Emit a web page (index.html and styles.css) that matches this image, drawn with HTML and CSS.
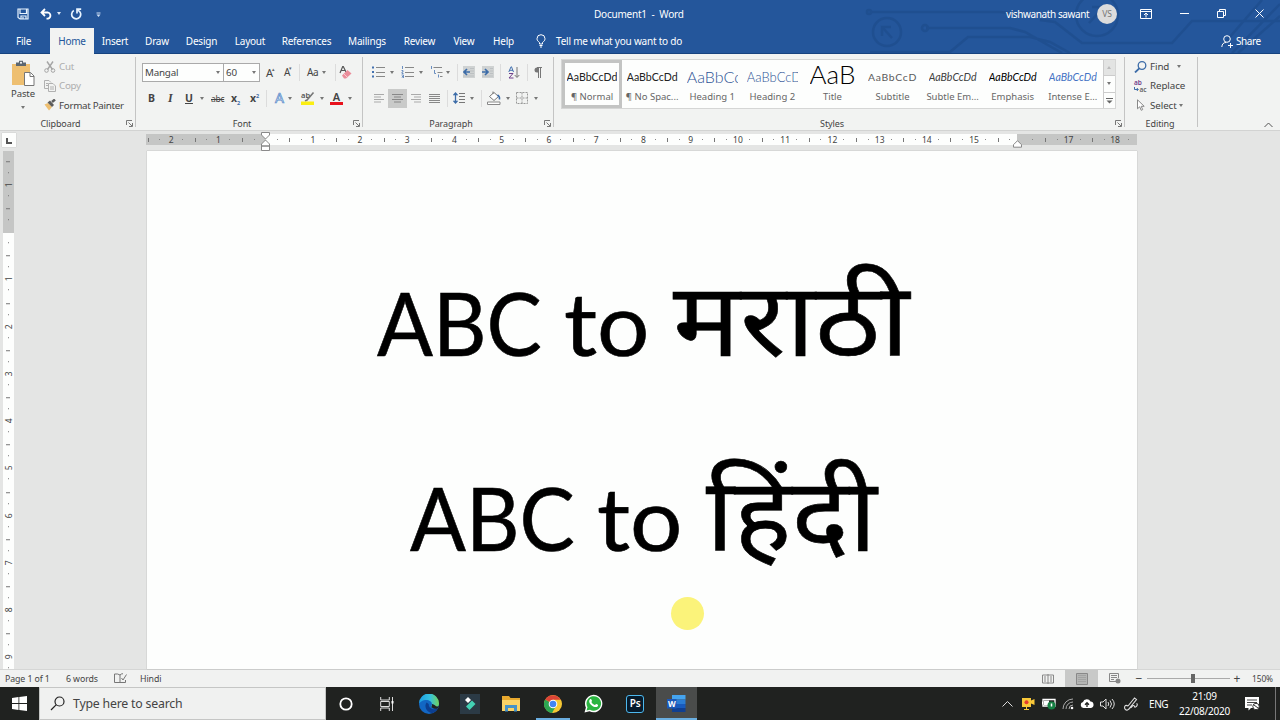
FILE: index.html
```
<!DOCTYPE html>
<html lang="en">

<head>
    <meta charset="UTF-8">
    <meta name="viewport" content="width=device-width, initial-scale=1.0">
    <title>Document1 - Word</title>
    <link rel="stylesheet" href="styles.css">
</head>

<body>
    <header class="header">
        <!-- Circuit pattern behind the title bar -->
        <svg class="header-art" width="430" height="53" viewBox="850 0 430 53">
            <path d="M870 12H1000L1020 14M926 28H1010L1025 32L1062 53M870 52H950L968 37H1030L1050 42L1070 53M1040 20L1055 22L1082 43H1172L1192 21H1280M1232 53L1280 4M1238 53L1280 16M1222 46L1262 0" />
            <circle cx="887" cy="32" r="14" />
            <path d="M892 38L883 28M882 36V27H891" />
            <circle cx="1097" cy="15" r="21" />
            <path d="M1089 23L1103 8M1092 7H1104V19" />
            <circle cx="925" cy="28" r="3" />
            <circle cx="869" cy="12" r="2" />
        </svg>

        <div class="titlebar">
            <svg class="icon" width="12" height="12" viewBox="0 0 12 12"><path d="M1 1h10v10H3L1 9.500zM3 1v4.500h6.500V1M4 11V8h5v3M6 11V9" fill="none" stroke="#e8f4ff" stroke-width="1.200" /></svg>
            <svg class="icon" width="13" height="12" viewBox="0 0 13 12"><path d="M5 1L1.500 4.500L5 8M2 4.500H8a3.200 3.200 0 0 1 0 6.200H6.500" fill="none" stroke="#fff" stroke-width="1.800" /></svg>
            <i class="caret light"></i>
            <svg class="icon" width="12" height="12" viewBox="0 0 12 12"><path d="M3.800 2.500A4.500 4.500 0 1 0 8 2.200M7 5.500V1.200H11.200" fill="none" stroke="#e8f4ff" stroke-width="1.700" /></svg>
            <svg class="icon" width="5" height="6" viewBox="0 0 5 6"><path d="M.5 1h4" stroke="#cfe0f5" /><path d="M.5 2.500h4L2.500 5z" fill="#cfe0f5" /></svg>
            <span class="doc-title">Document1&nbsp; -&nbsp; Word</span>
            <span class="user-name">vishwanath sawant</span>
            <span class="avatar">VS</span>
            <svg class="icon" width="12" height="10" viewBox="0 0 12 10"><path d="M.5.5h11v9H.500zM.5 2.500h11M6 8.500V4M4 6l2-2 2 2" fill="none" stroke="#fff" /></svg>
            <svg class="icon" width="9" height="10" viewBox="0 0 9 10"><path d="M0 4.500h9" stroke="#fff" /></svg>
            <svg class="icon" width="9" height="9" viewBox="0 0 9 9"><path d="M.5 2.500h6v6h-6zM2.500 2.500v-2h6v6h-2" fill="none" stroke="#fff" /></svg>
            <svg class="icon" width="9" height="9" viewBox="0 0 9 9"><path d="M.5.5l8 8M8.500.5l-8 8" stroke="#fff" /></svg>
        </div>

        <nav class="tabs">
            <a>File</a>
            <a class="active">Home</a>
            <a>Insert</a>
            <a>Draw</a>
            <a>Design</a>
            <a>Layout</a>
            <a>References</a>
            <a>Mailings</a>
            <a>Review</a>
            <a>View</a>
            <a>Help</a>
            <svg class="icon" width="10" height="14" viewBox="0 0 10 14"><path d="M3.500 10V8.500C2 7.200 1 6.500 1 4.700a4 4 0 0 1 8 0C9 6.500 8 7.200 6.500 8.500V10zM3.500 11.500h3M4 13h2" fill="none" stroke="#fff" /></svg>
            <span class="tell-me">Tell me what you want to do</span>
            <svg class="icon" width="12" height="13" viewBox="0 0 12 13"><circle cx="6" cy="4" r="3.300" fill="none" stroke="#fff" /><path d="M.8 12C1 9 2.500 7.600 5 7.500M7 10.500h5M9.500 8v5" fill="none" stroke="#fff" /></svg>
            <span class="share">Share</span>
        </nav>
    </header>

    <section class="ribbon">
        <div class="group clipboard">
            <div class="paste">
                <svg width="24" height="27" viewBox="0 0 24 27"><path d="M1 4h18v21H1z" fill="#eebf71" /><path d="M5 6V2.500h3V.8h4v1.700h3V6z" fill="#5c6670" /><circle cx="10" cy="2.800" r="1" fill="#fff" /><path d="M13.500 12.500h6l3.500 3.500v9.500h-9.500z" fill="#fff" stroke="#777" /><path d="M19 12.500V16.500h4" fill="none" stroke="#777" /></svg>
                <span>Paste</span>
                <i class="caret"></i>
            </div>
            <div class="clip-actions">
                <div class="action disabled"><svg width="12" height="12" viewBox="0 0 12 12"><path d="M3 .5l5.500 8M9 .5L3.500 8.500" stroke="#a5a5a5" stroke-width="1.400" /><circle cx="2.500" cy="9.500" r="1.800" fill="none" stroke="#a5a5a5" /><circle cx="9" cy="9.500" r="1.800" fill="none" stroke="#a5a5a5" /></svg>Cut</div>
                <div class="action disabled"><svg width="12" height="12" viewBox="0 0 12 12"><path d="M5 8.500H.500v-8H5L7 2.500M4.500 3.500H9l2.500 2.500v5.500h-7zM2 3.500h2M2 5.500h2M6 7h4M6 9h4" fill="none" stroke="#b0b0b0" /></svg>Copy</div>
                <div class="action"><svg width="12" height="12" viewBox="0 0 12 12"><path d="M.5 5.500L4 4l4 4-3 3.500z" fill="#eebf71" /><path d="M3.500 3.500L6 1.500l4 4.500-2 2z" fill="#5c5c5c" /><path d="M8 3l3-2.500" stroke="#5c5c5c" stroke-width="2.500" /></svg>Format Painter</div>
            </div>
            <span class="group-name">Clipboard</span>
            <svg class="launcher" width="7" height="7" viewBox="0 0 7 7"><path d="M.5 5V.5H6M2.500 2.500l3.500 3.500M6.500 3v3.500H3" fill="none" stroke="#777" /></svg>
        </div>

        <div class="group font">
            <div class="row font-top">
                <span class="combo">Mangal<i class="caret"></i></span>
                <span class="combo">60<i class="caret"></i></span>
                <span class="grow">A<sup>&#9652;</sup></span>
                <span class="grow small">A<sup>&#9662;</sup></span>
                <i class="sep"></i>
                <span class="case">Aa</span>
                <i class="caret"></i>
                <i class="sep"></i>
                <svg width="13" height="13" viewBox="0 0 13 13"><path d="M1 7L3.700 .6h.6L7 6M2.200 4.500h3.500" fill="none" stroke="#555" stroke-width="1.200" /><path d="M3 9.500L8.500 4l4 3.500L7 12.500H5z" fill="#ea8d9a" /><path d="M5 8l3.500 3.500" stroke="#f6ccd2" /></svg>
            </div>
            <div class="row font-bottom">
                <b>B</b>
                <b class="italic">I</b>
                <b class="underline">U</b>
                <i class="caret"></i>
                <span class="strike">abc</span>
                <b>x<sub>2</sub></b>
                <b>x<sup>2</sup></b>
                <i class="sep"></i>
                <span class="effect">A</span>
                <i class="caret"></i>
                <svg class="highlight" width="14" height="14" viewBox="0 0 14 14"><text x="0" y="7" font-size="7.500" font-weight="600" fill="#555">ab</text><path d="M12.500 1.500L6 9l-2 1" fill="none" stroke="#777" stroke-width="1.600" /><path d="M0 10.500h13V14H0z" fill="#fbee12" /></svg>
                <i class="caret"></i>
                <span class="font-color">A</span>
                <i class="caret"></i>
            </div>
            <span class="group-name">Font</span>
            <svg class="launcher" width="7" height="7" viewBox="0 0 7 7"><path d="M.5 5V.5H6M2.500 2.500l3.500 3.500M6.500 3v3.500H3" fill="none" stroke="#777" /></svg>
        </div>

        <div class="group paragraph">
            <div class="row para-top">
                <svg width="13" height="12" viewBox="0 0 13 12"><path d="M0 1.500h2M0 6h2M0 10.500h2" stroke="#4472b0" stroke-width="2" /><path d="M4 1.500h9M4 6.500h9M4 10.500h9" stroke="#888" /></svg>
                <i class="caret"></i>
                <svg width="13" height="12" viewBox="0 0 13 12"><path d="M1.500 0v3M.500 4.500h1.500V6H1v1.500h1.500M.500 9h2v3h-2M1 10.500h1" fill="none" stroke="#6b8fc0" /><path d="M4 1.500h9M4 6.500h9M4 10.500h9" stroke="#888" /></svg>
                <i class="caret"></i>
                <svg width="13" height="12" viewBox="0 0 13 12"><path d="M1.500 0v3M4.500 4v3.500h1.500M8.500 8.500v3" fill="none" stroke="#6b8fc0" /><path d="M3.500 1.500H12M7.500 6.500h5M10 10.500h2.500" stroke="#888" /></svg>
                <i class="caret"></i>
                <i class="sep"></i>
                <svg width="12" height="12" viewBox="0 0 12 12"><path d="M0 0h12v12H0z" fill="#cfd2d2" /><path d="M7 2.500h4M7 5h4M7 7.500h4M0 10h11" stroke="#bcc0c2" /><path d="M7 6H1.500M4 3L1 6l3 3" fill="none" stroke="#3c6ca8" stroke-width="1.700" /></svg>
                <svg width="12" height="12" viewBox="0 0 12 12"><path d="M0 0h12v12H0z" fill="#cfd2d2" /><path d="M8 2.500h3M8 5h3M8 7.500h3M0 10h11" stroke="#bcc0c2" /><path d="M0 6h5.500M3 3l3 3-3 3" fill="none" stroke="#3c6ca8" stroke-width="1.700" /></svg>
                <i class="sep"></i>
                <svg width="12" height="13" viewBox="0 0 12 13"><path d="M.8 6L3 .8h.5L5.500 6M1.500 4.300H5" fill="none" stroke="#4472b0" /><path d="M1 7.500h4L1 12h4.500" fill="none" stroke="#70418c" /><path d="M9 1v10M6.700 9L9 11.500 11.300 9" fill="none" stroke="#777" /></svg>
                <i class="sep"></i>
                <svg width="8" height="11" viewBox="0 0 8 11"><path d="M4 .5H3a2.500 2.500 0 0 0 0 5h1z" fill="#777" /><path d="M3 .5h5M4.500 0v11M6.500 0v11" stroke="#777" fill="none" /></svg>
            </div>
            <div class="row para-bottom">
                <svg width="10" height="9" viewBox="0 0 10 9"><path d="M0 .5h10M0 3h7M0 5.500h10M0 8h7" stroke="#aaa" /></svg>
                <span class="pressed"><svg width="11" height="9" viewBox="0 0 11 9"><path d="M0 .5h11M2 3h7M0 5.500h11M2 8h7" stroke="#888" /></svg></span>
                <svg width="10" height="9" viewBox="0 0 10 9"><path d="M0 .5h10M3 3h7M0 5.500h10M3 8h7" stroke="#aaa" /></svg>
                <svg width="11" height="9" viewBox="0 0 11 9"><path d="M0 .5h11M0 2.500h11M0 4.500h11M0 6.500h11M0 8.500h11" stroke="#888" /></svg>
                <i class="sep"></i>
                <svg width="12" height="12" viewBox="0 0 12 12"><path d="M2.500 1v10M.500 3.200l2-2.200 2 2.200M.500 8.800l2 2.200 2-2.200" fill="none" stroke="#3c6ca8" stroke-width="1.300" /><path d="M6 1.500h6M6 4.500h6M6 7.500h6M6 10.500h6" stroke="#777" /></svg>
                <i class="caret"></i>
                <i class="sep"></i>
                <svg width="14" height="14" viewBox="0 0 14 14"><path d="M2.500 5.500L7 1.500l4.500 4L7 9.500zM6 3V.5" fill="#fff" stroke="#777" /><path d="M10.500 4q2.500 1.500 2 4.500" fill="none" stroke="#3c6ca8" stroke-width="1.500" /><path d="M.5 11h12.500v2.500H.500z" fill="#fff" stroke="#888" /></svg>
                <i class="caret"></i>
                <svg width="12" height="12" viewBox="0 0 12 12"><path d="M.5.5h11v11H.500zM6 .5v11M.500 6h11" fill="none" stroke="#999" stroke-dasharray="2 1" /></svg>
                <i class="caret"></i>
            </div>
            <span class="group-name">Paragraph</span>
            <svg class="launcher" width="7" height="7" viewBox="0 0 7 7"><path d="M.5 5V.5H6M2.500 2.500l3.500 3.500M6.500 3v3.500H3" fill="none" stroke="#777" /></svg>
        </div>

        <div class="group styles">
            <div class="gallery">
                <div class="style selected"><span class="preview">AaBbCcDd</span><span>&para; Normal</span></div>
                <div class="style"><span class="preview">AaBbCcDd</span><span>&para; No Spac...</span></div>
                <div class="style"><span class="preview heading1">AaBbCc</span><span>Heading 1</span></div>
                <div class="style"><span class="preview heading2">AaBbCcD</span><span>Heading 2</span></div>
                <div class="style"><span class="preview title">AaB</span><span>Title</span></div>
                <div class="style"><span class="preview subtitle">AaBbCcD</span><span>Subtitle</span></div>
                <div class="style"><span class="preview subtle">AaBbCcDd</span><span>Subtle Em...</span></div>
                <div class="style"><span class="preview emphasis">AaBbCcDd</span><span>Emphasis</span></div>
                <div class="style"><span class="preview intense">AaBbCcDd</span><span>Intense E...</span></div>
                <div class="gallery-scroll">
                    <div class="off"><i class="caret up"></i></div>
                    <div><i class="caret"></i></div>
                    <div><svg width="7" height="7" viewBox="0 0 7 7"><path d="M0 1.500h7" stroke="#666" /><path d="M.5 3.500h6l-3 3z" fill="#666" /></svg></div>
                </div>
            </div>
            <span class="group-name">Styles</span>
            <svg class="launcher" width="7" height="7" viewBox="0 0 7 7"><path d="M.5 5V.5H6M2.500 2.500l3.500 3.500M6.500 3v3.500H3" fill="none" stroke="#777" /></svg>
        </div>

        <div class="group editing">
            <div class="action"><svg width="13" height="12" viewBox="0 0 13 12"><circle cx="8" cy="4.500" r="3.800" fill="none" stroke="#3c6ca8" stroke-width="1.300" /><path d="M5.300 7.300L1 11.500" stroke="#3c6ca8" stroke-width="1.800" /></svg>Find<i class="caret"></i></div>
            <div class="action"><svg class="highlight" width="13" height="12" viewBox="0 0 13 12"><text x="0" y="5" font-size="6.500" font-weight="600" fill="#70418c">ab</text><text x="5.500" y="11.500" font-size="6.500" font-weight="600" fill="#666">ac</text><path d="M.5 7v2.500h3.500M2.800 8l1.500 1.500L2.800 11" fill="none" stroke="#3c6ca8" /></svg>Replace</div>
            <div class="action"><svg width="13" height="12" viewBox="0 0 13 12"><path d="M3.500.8v9l2.200-2 1.500 3.500 1.500-.7-1.500-3.300h3z" fill="#fff" stroke="#888" /></svg>Select<i class="caret"></i></div>
            <span class="group-name">Editing</span>
        </div>
        <svg class="collapse" width="9" height="6" viewBox="0 0 9 6"><path d="M.5 5L4.500 1l4 4" fill="none" stroke="#555" /></svg>
    </section>

    <main class="workspace">
        <aside class="side">
            <div class="tab-stop"><svg width="6" height="6" viewBox="0 0 6 6"><path d="M1 0v5h5" fill="none" stroke="#555" stroke-width="2" /></svg></div>
            <div class="v-ruler">
                <span>1</span>
                <span></span>
                <span>1</span><span>2</span><span>3</span><span>4</span><span>5</span><span>6</span><span>7</span><span>8</span><span>9</span>
            </div>
        </aside>
        <div class="canvas">
            <div class="h-ruler">
                <span>2</span><span>1</span><span></span><span>1</span><span>2</span><span>3</span><span>4</span><span>5</span><span>6</span><span>7</span><span>8</span><span>9</span><span>10</span><span>11</span><span>12</span><span>13</span><span>14</span><span>15</span><span></span><span>17</span><span>18</span>
                <svg class="indent left" width="9" height="20" viewBox="0 0 9 20"><path d="M.5.5h8V3l-4 4-4-4zM4.500 8l4 4v2h-8v-2zM.500 14h8v4.500h-8z" fill="#fff" stroke="#888" /></svg>
                <svg class="indent right" width="9" height="8" viewBox="0 0 9 8"><path d="M4.500.7l4 4v2.500h-8V4.700z" fill="#fff" stroke="#888" /></svg>
            </div>
            <article class="page">
                <p class="line first"><span class="latin">ABC</span><span class="latin to">to</span><span class="deva" lang="mr">मराठी</span></p>
                <p class="line second"><span class="latin">ABC</span><span class="latin to">to</span><span class="deva" lang="hi">हिंदी</span></p>
                <div class="pointer"></div>
            </article>
        </div>
    </main>

    <footer class="statusbar">
        <span>Page 1 of 1</span>
        <span>6 words</span>
        <svg width="13" height="11" viewBox="0 0 13 11"><path d="M6 9.500V2Q4 .5.5 1v8.500h5.500M6 2Q7 .7 9 .7M6 9.500h5.500V7M7.500 5l1.500 2 3.500-5.500" fill="none" stroke="#777" /></svg>
        <span>Hindi</span>
        <div class="view"><svg width="12" height="10" viewBox="0 0 12 10"><path d="M.5 1h11v8H.500zM6 0v10M2 3h2M2 5h2M2 7h2M8 3h2M8 5h2M8 7h2" fill="none" stroke="#888" /></svg></div>
        <div class="view on"><svg width="12" height="12" viewBox="0 0 12 12"><path d="M.5.5h11v11H.500z" fill="#b4b5b4" stroke="#888" /><path d="M2 2.500h8M2 4.500h8M2 6.500h8M2 8.500h8" stroke="#a2a3a2" /></svg></div>
        <div class="view"><svg width="12" height="11" viewBox="0 0 12 11"><path d="M7 8.500H.500v-8h9V5M2 2.500h6M2 4.500h6M2 6.500h3" fill="none" stroke="#888" /><circle cx="9" cy="8" r="2.500" fill="#888" /></svg></div>
        <span class="zoom-btn">&minus;</span>
        <div class="slider"><i></i></div>
        <span class="zoom-btn">+</span>
        <span class="percent">150%</span>
    </footer>

    <div class="taskbar">
        <div class="start"><svg width="15" height="15" viewBox="0 0 15 15"><path d="M0 2l6.500-1v6H0zM7.300.9L15 0v7H7.300zM0 8h6.500v6L0 13zM7.300 8H15v7l-7.700-1z" fill="#fff" /></svg></div>
        <div class="search">
            <svg width="15" height="15" viewBox="0 0 15 15"><circle cx="9.500" cy="5.500" r="4.500" fill="none" stroke="#222" stroke-width="1.200" /><path d="M6.300 8.700L1 14" stroke="#222" stroke-width="1.200" /></svg>
            <span>Type here to search</span>
        </div>
        <div class="apps">
            <div><svg width="14" height="14" viewBox="0 0 14 14"><circle cx="7" cy="7" r="5.700" fill="none" stroke="#fff" stroke-width="1.800" /></svg></div>
            <div><svg width="15" height="14" viewBox="0 0 15 14"><path d="M.7 0v3h8.600V0M.7 14v-3h8.600v3M.7 4.500h8.600v5H.700zM12.500 0v14" fill="none" stroke="#ddd" /><path d="M11.500 4h2v2.500h-2z" fill="#fff" /></svg></div>
            <div><svg width="20" height="20" viewBox="0 0 20 20">
                <defs>
                    <linearGradient id="edgeTop" x1="0" x2="1"><stop offset="0" stop-color="#1b9de2" /><stop offset=".55" stop-color="#35c1df" /><stop offset="1" stop-color="#72d45a" /></linearGradient>
                </defs>
                <circle cx="10" cy="10" r="10" fill="#1267c4" />
                <path d="M0 9.500A10 10 0 0 1 20 9.500C20 13 17 14 13.500 13.500 11.500 13 12.500 12 13 10.500 13 7 9.500 5.500 6 6 3 6.500 1 8 0 9.500z" fill="url(#edgeTop)" />
                <path d="M7.500 8.500C5 12 7 18 13 19.300 16 18.300 18 16.500 18.500 14.500 15 16.500 9.500 14.500 9.700 10z" fill="#0c3f91" />
                <path d="M12.800 13.500c-1-.5.5-1.500.2-3.500 3 0 4 4 6.800 2-.5 1-.8 1.800-1.300 2.600-2 .6-4 0-5.700-1.100z" fill="#202220" />
            </svg></div>
            <div><svg width="20" height="20" viewBox="0 0 20 20"><path d="M0 0h20v20H0z" fill="#2b3a45" /><path d="M8 3l3 3-3 3-3-3z" fill="#fff" /><path d="M12 6.500l3.500 3.500-6 6L6 12.500z" fill="#43d2b5" /></svg></div>
            <div><svg width="18" height="17" viewBox="0 0 18 17"><path d="M0 1h7l1.500 2H18v13H0z" fill="#e8a92e" /><path d="M0 5h18v11H0z" fill="#fbd366" /><path d="M3 10h12v6.500h-3V13H6v3.500H3z" fill="#4693c8" /></svg></div>
            <div class="open"><svg width="18" height="18" viewBox="0 0 18 18"><circle cx="9" cy="9" r="9" fill="#f6c834" /><path d="M9 9L1.200 4.500A9 9 0 0 0 8 18l4-7z" fill="#2da652" /><path d="M9 9L1.200 4.500A9 9 0 0 1 16.800 4.800H9z" fill="#dc4437" /><circle cx="9" cy="9" r="4.300" fill="#fff" /><circle cx="9" cy="9" r="3.300" fill="#4285f4" /></svg></div>
            <div><svg width="19" height="19" viewBox="0 0 19 19"><path d="M.5 18.500l1.400-5A8.700 8.700 0 1 1 5.500 17.200z" fill="#fff" /><path d="M2.500 16.500l1-3.300A7.300 7.300 0 1 1 6 15.700z" fill="#2bb441" /><path d="M6 5.200C7 4.300 7.600 5.500 8 6.800 8 7.500 7.300 7.800 7.500 8.300c.8 1.500 2 2.300 3.300 2.800.6-.2.9-1.400 1.500-1.100 2.200 1 2 1.100 1.500 2.200-1.500 1.700-4 .8-6-.8C5.500 9.500 4.300 7 6 5.200z" fill="#fff" /></svg></div>
            <div><span class="ps">Ps</span></div>
            <div class="open current"><svg width="19" height="19" viewBox="0 0 19 19"><path d="M5 1h13.500v4.500H5z" fill="#45a4ef" /><path d="M5 5.500h13.500V10H5z" fill="#2b7cd3" /><path d="M5 10h13.500v4H5z" fill="#185abd" /><path d="M5 14h13.500v4H5z" fill="#103f91" /><path d="M0 5h9.500v9.500H0z" fill="#1b58b8" /><text x="1" y="12.500" font-size="8" font-weight="700" fill="#fff">W</text></svg></div>
        </div>
        <div class="tray">
            <svg width="11" height="7" viewBox="0 0 11 7"><path d="M.5 6.500l5-5 5 5" fill="none" stroke="#ddd" /></svg>
            <svg width="14" height="13" viewBox="0 0 14 13"><path d="M1 1h9v2.500L13.500 2v6L10 6.500V10H1z" fill="#f8c839" /><path d="M5.500 10v2M3 12.500h5" stroke="#f8c839" /><circle cx="5.500" cy="5.200" r="2" fill="#e33b2e" /></svg>
            <svg width="14" height="12" viewBox="0 0 14 12"><path d="M1 1.500h12V8H1zM0 3.500v3" fill="none" stroke="#fff" stroke-width="1.300" /><path d="M2 2.500h5V7H2z" fill="#fff" /><circle cx="9.500" cy="7.500" r="4" fill="#168044" /><path d="M9.500 5.500v3" stroke="#fff" stroke-width="1.500" /></svg>
            <svg width="12" height="12" viewBox="0 0 12 12"><path d="M1 11A10 10 0 0 1 11 1M4 11a7 7 0 0 1 7-7M7 11a4 4 0 0 1 4-4" fill="none" stroke="#aaa" /><circle cx="10" cy="10" r="1.300" fill="#fff" /></svg>
            <svg width="14" height="11" viewBox="0 0 14 11"><path d="M3.500 10a3 3 0 0 1-.5-5.900 4 4 0 0 1 7.500-.6A3.300 3.300 0 0 1 11 10z" fill="#fff" /><path d="M7 9V5M5 6.700L7 4.700l2 2" fill="none" stroke="#202220" stroke-width="1.300" /></svg>
            <svg width="15" height="12" viewBox="0 0 15 12"><path d="M.5 4h2.500L6 1v10L3 8H.500zM8 4q1.500 2 0 4M10 2.500q3 3.500 0 7M12 1q4.500 5 0 10" fill="none" stroke="#ddd" /></svg>
            <svg width="14" height="14" viewBox="0 0 14 14"><path d="M4 9l6.500-8 2 1.500L6 10.500M4 9C1 7 0 10 1 12s4 1 5-1.500M6 10.500c1.500 1 2-2 3.500-2s.5 2 2 1.500 2.500-3 1-3.500" fill="none" stroke="#ddd" stroke-width="1.100" /></svg>
            <span class="lang">ENG</span>
            <span class="clock">21:09<br>22/08/2020</span>
            <svg width="15" height="14" viewBox="0 0 15 14"><path d="M0 0h14v11H6l-2.500 2.500V11H0z" fill="#fff" /><path d="M2 3h10M2 5.500h10M2 8h5" stroke="#444" /><circle cx="11" cy="9.500" r="3.200" fill="#fff" stroke="#333" /><path d="M9 8l4 3" stroke="#333" /></svg>
        </div>
    </div>
</body>

</html>
```

FILE: styles.css
```
* {
    box-sizing: border-box;
}

body {
    margin: 0;
    width: 1280px;
    height: 720px;
    overflow: hidden;
    display: flex;
    flex-direction: column;
    font-family: "Noto Sans", "Open Sans", sans-serif;
    font-size: 10px;
    color: #444;
    background: #e4e5e4;
}

svg {
    display: block;
    flex: none;
}

sup,
sub {
    line-height: 0;
}

/* Header */
.header {
    position: relative;
    height: 54px;
    background: #24569b;
    border-bottom: 1px solid #17437f;
    color: #fff;
    letter-spacing: -0.22px;
    flex: none;
}

.header-art {
    position: absolute;
    top: 0;
    right: 0;
    fill: none;
    stroke: #1d4b8a;
    stroke-width: 2.5;
    opacity: 0.6;
}

.titlebar {
    position: relative;
    height: 27px;
    display: grid;
    grid-template-columns: 23px 17px 13px 26px 498px 412px 91px 43px 40px 37px 38px 20px;
    padding-left: 17px;
    align-items: center;
    white-space: nowrap;
}

.titlebar > :nth-child(5) {
    margin-top: 2px;
}

.user-name {
    letter-spacing: -0.4px;
}

.avatar {
    width: 20px;
    height: 20px;
    border-radius: 50%;
    background: #dcdcdc;
    color: #777;
    font-size: 8.5px;
    line-height: 20px;
    text-align: center;
}

.tabs {
    position: relative;
    height: 26px;
    margin-top: 1px;
    display: grid;
    grid-template-columns: 50px 44px 42px 42px 47px 50px 63px 58px 47px 42px 51px 20px 665px 15px 50px;
    align-items: center;
    white-space: nowrap;
}

.tabs a {
    text-align: center;
    line-height: 26px;
}

.tabs a:first-child {
    padding-right: 3px;
}

.tabs .active {
    background: #f2f3f2;
    color: #24569b;
}

.tabs a:nth-child(11) {
    padding-right: 14px;
}

.share {
    letter-spacing: -0.4px;
}

.caret {
    display: block;
    width: 0;
    height: 0;
    border: 2.5px solid transparent;
    border-top: 3px solid #777;
    border-bottom: 0;
}

.caret.light {
    border-top-color: #dbe8f8;
}

.caret.up {
    border-top: 0;
    border-bottom: 3px solid #bbb;
}

/* Ribbon */
.ribbon {
    height: 77px;
    flex: none;
    display: flex;
    background: #f2f3f2;
    border-bottom: 1px solid #d2d3d2;
}

.group {
    position: relative;
    height: 70px;
    margin-top: 3px;
    border-right: 1px solid #c4c4c4;
    flex: none;
}

.group-name {
    position: absolute;
    bottom: -4px;
    left: 0;
    right: 14px;
    text-align: center;
    font-size: 9px;
    letter-spacing: -0.1px;
    line-height: 14px;
}

.launcher {
    position: absolute;
    right: 2px;
    bottom: 0;
}

.clipboard {
    width: 136px;
    display: flex;
}

.paste {
    width: 44px;
    padding: 3px 0 0 2px;
    display: flex;
    flex-direction: column;
    align-items: center;
    font-size: 9.5px;
    line-height: 14px;
    letter-spacing: -0.1px;
}

.paste .caret {
    margin-top: 5px;
}

.action {
    display: flex;
    align-items: center;
    height: 19.3px;
    gap: 3px;
    font-size: 9.8px;
    white-space: nowrap;
}

.clip-actions .action {
    letter-spacing: -0.3px;
}

.disabled {
    color: #aeaeae;
}

.font {
    width: 227px;
}

.row {
    display: grid;
    align-items: center;
    height: 26px;
    white-space: nowrap;
}

.font-top {
    padding: 0 0 0 6px;
    height: 30px;
    grid-template-columns: 81px 42px 18px 16px 6px 17px 13px 4px 20px;
    font-size: 10.5px;
}

.combo {
    height: 19px;
    margin-right: -1px;
    padding: 0 3px 0 2px;
    display: flex;
    align-items: center;
    justify-content: space-between;
    font-size: 9.8px;
    letter-spacing: -0.2px;
    background: #fdfefd;
    border: 1px solid #aaa;
}

.combo + .combo {
    margin-right: 5px;
}

.grow {
    padding-left: 1px;
    font-size: 11px;
}

.grow sup {
    font-size: 5px;
    vertical-align: 6px;
    margin-left: -1px;
    color: #666;
}

.grow.small {
    font-size: 10px;
}

.case {
    padding-left: 2px;
    letter-spacing: -0.3px;
    font-size: 10px;
}

.sep {
    width: 1px;
    height: 17px;
    background: #dcdcdc;
}

.font-bottom {
    padding-left: 12px;
    height: 22px;
    grid-template-columns: 20px 17px 15px 11px 20px 19px 16px 7px 15px 12px 20px 9px 19px 6px;
    font-size: 10.5px;
}

.font-bottom sub,
.font-bottom sup {
    font-size: 5.5px;
    color: #3c6ca8;
}

.italic {
    font-family: "Liberation Serif", serif;
    font-style: italic;
    font-size: 12px;
}

.underline {
    text-decoration: underline;
}

.strike {
    font-size: 8.5px;
    letter-spacing: -0.3px;
    text-decoration: line-through;
}

.effect {
    margin-left: 2px;
    font-size: 14px;
    line-height: 14px;
    color: #e3ecf7;
    -webkit-text-stroke: 0.7px #5b8ccb;
}

.highlight {
    overflow: visible;
}

.font-bottom .highlight {
    margin-left: 1px;
}

.font-color {
    width: 13px;
    height: 14px;
    margin-left: 1px;
    line-height: 11px;
    font-size: 11px;
    font-weight: 600;
    text-align: center;
    border-bottom: 3px solid #e8121c;
}

.paragraph {
    width: 191px;
}

.para-top {
    padding: 0 0 0 9px;
    height: 30px;
    grid-template-columns: 18px 11px 18px 11px 16px 11px 6px 19px 18px 8px 19px 7px 12px;
}

.para-bottom {
    padding-left: 11px;
    height: 22px;
    grid-template-columns: 14px 23px 18px 18px 6px 17px 11px 6px 19px 10px 18px 6px;
}

.pressed {
    width: 19px;
    height: 19px;
    display: flex;
    align-items: center;
    justify-content: center;
    background: #c9cac9;
}

.styles {
    width: 571px;
}

.gallery {
    margin: 2px 0 0 7px;
    width: 555px;
    height: 50px;
    display: flex;
    background: #fdfefd;
    border: 1px solid #d5d6d5;
}

.style {
    width: 60.1px;
    padding: 0 4px;
    overflow: hidden;
    display: flex;
    flex-direction: column;
    align-items: center;
    font-size: 9.5px;
    line-height: 13px;
    color: #666;
    white-space: nowrap;
}

.selected {
    box-shadow: inset 0 0 0 3px #c3c4c3;
}

.preview {
    height: 30px;
    max-width: 51px;
    overflow: hidden;
    line-height: 34px;
    font-family: Lato, sans-serif;
    font-size: 10.6px;
    color: #222;
}

.heading1 {
    font-size: 16px;
    font-weight: 300;
    color: #2f5496;
}

.heading2 {
    font-size: 13px;
    font-weight: 300;
    color: #2f5496;
}

.title {
    font-size: 26px;
    font-weight: 300;
    line-height: 28px;
    color: #000;
}

.subtitle {
    font-size: 10.4px;
    letter-spacing: 0.7px;
    color: #5a5a5a;
}

.subtle,
.emphasis,
.intense {
    font-style: italic;
}

.subtle {
    color: #404040;
}

.emphasis {
    color: #000;
}

.intense {
    color: #4472c4;
}

.gallery-scroll {
    width: 12px;
    display: flex;
    flex-direction: column;
    border-left: 1px solid #ccc;
}

.gallery-scroll div {
    flex: 1;
    display: flex;
    align-items: center;
    justify-content: center;
    border-bottom: 1px solid #ccc;
}

.gallery-scroll div:last-child {
    border-bottom: 0;
}

.gallery-scroll .off {
    background: #e3e4e3;
}

.editing {
    width: 73px;
    padding-left: 9px;
}

.editing .action {
    letter-spacing: -0.1px;
}

.editing .group-name {
    right: 2px;
}

.editing .caret {
    margin-left: 5px;
}

.editing .action:nth-child(3) .caret {
    margin-left: -1px;
}

.collapse {
    margin: 68px 0 0 66px;
}

/* Workspace */
.workspace {
    flex: 1;
    display: flex;
    min-height: 0;
}

.side {
    width: 146px;
    flex: none;
}

.tab-stop {
    width: 14px;
    height: 14px;
    margin: 2px 0 4px 2px;
    display: flex;
    align-items: center;
    justify-content: center;
    background: #fdfefd;
    box-shadow: 0 0 1px #aaa;
}

.tab-stop svg {
    margin-top: 2px;
}

.h-ruler {
    position: relative;
    display: flex;
    width: 991px;
    height: 11px;
    padding-left: 1.5px;
    margin: 3px 0 6px 0;
    background: linear-gradient(to right, #c5c6c5 120px, #fdfefd 120px, #fdfefd 871px, #c5c6c5 871px);
}

.h-ruler span {
    width: 47.24px;
    flex: none;
    text-align: center;
    font-size: 8.5px;
    line-height: 11px;
    background:
        linear-gradient(#777, #777) 0 4px / 1px 4px no-repeat,
        linear-gradient(#888, #888) 25% 5px / 1px 1px no-repeat,
        linear-gradient(#888, #888) 75% 5px / 1px 1px no-repeat;
}

.h-ruler span:last-of-type {
    width: 39px;
    text-align: left;
    padding-left: 18px;
    background-position: 0 4px, 12px 5px, 36px 5px;
}

.indent {
    position: absolute;
    top: -2px;
    left: 115px;
}

.indent.right {
    top: 6px;
    left: 867px;
}

.v-ruler {
    width: 11px;
    height: 518px;
    margin-left: 3px;
    padding-top: 10px;
    overflow: hidden;
    display: flex;
    flex-direction: column;
    background: linear-gradient(#c5c6c5 82px, #fdfefd 82px);
}

.v-ruler span {
    height: 47.24px;
    flex: none;
    width: 11px;
    writing-mode: vertical-rl;
    transform: rotate(180deg);
    text-align: center;
    font-size: 8.5px;
    line-height: 11px;
    background:
        linear-gradient(#777, #777) 4px 100% / 4px 1px no-repeat,
        linear-gradient(#777, #777) 5px 25% / 1px 1px no-repeat,
        linear-gradient(#777, #777) 5px 75% / 1px 1px no-repeat;
}

.canvas {
    width: 991px;
    display: flex;
    flex-direction: column;
}

.page {
    position: relative;
    flex: 1;
    margin-left: 1px;
    overflow: hidden;
    background: #fdfefd;
    box-shadow: 0 0 1px #999;
    color: #000;
}

.line {
    margin: 0;
    height: 195px;
    line-height: 195px;
    display: flex;
    align-items: baseline;
    font-size: 88px;
    white-space: nowrap;
}

.line.first {
    margin-top: 68px;
    padding-left: 230px;
}

.line.second {
    padding-left: 263px;
}

.latin {
    width: 187px;
    font-family: Lato, sans-serif;
    transform: scaleX(0.94);
    transform-origin: left;
    -webkit-text-stroke: 0.6px #000;
}

.latin.to {
    width: 109px;
    transform: scaleX(1.05);
}

.deva {
    font-size: 102px;
    transform: scaleX(1.1);
    transform-origin: left;
    -webkit-text-stroke: 0.6px #000;
}

.second .deva {
    transform: scaleX(1.06);
}

.pointer {
    position: absolute;
    left: 524px;
    top: 446px;
    width: 33px;
    height: 33px;
    border-radius: 50%;
    background: #fbf37a;
}

/* Status bar */
.statusbar {
    height: 18px;
    flex: none;
    display: grid;
    grid-template-columns: 61px 48px 26px 891px 34px 33px 33px 16px 83px 14px 36px;
    align-items: center;
    padding-left: 5px;
    font-size: 8.8px;
    letter-spacing: -0.1px;
    white-space: nowrap;
    background: #f1f2f1;
    border-top: 1px solid #d5d6d5;
}

.view {
    height: 17px;
    display: flex;
    align-items: center;
    justify-content: center;
}

.view.on {
    background: #c8c9c8;
}

.zoom-btn {
    font-size: 12px;
    line-height: 16px;
    text-align: center;
}

.slider {
    height: 9px;
    background: linear-gradient(#aaa, #aaa) 0 4px / 100% 1px no-repeat;
    display: flex;
    justify-content: center;
}

.slider i {
    width: 4px;
    margin-left: 9px;
    background: #666;
}

.percent {
    padding-left: 8px;
    font-size: 8.4px;
}

/* Taskbar */
.taskbar {
    height: 33px;
    flex: none;
    display: flex;
    background: #202220;
    color: #fff;
}

.start {
    width: 39px;
    display: flex;
    align-items: center;
    justify-content: center;
}

.search {
    width: 287px;
    padding-left: 10px;
    display: flex;
    align-items: center;
    gap: 8px;
    font-size: 12.3px;
    letter-spacing: -0.2px;
    color: #444;
    background: #f0f1f0;
    border: 1px solid #c5c6c5;
}

.apps {
    display: grid;
    grid-template-columns: repeat(9, 41.3px);
    margin-left: -0.5px;
}

.apps div {
    display: flex;
    align-items: center;
    justify-content: center;
}

.apps .open {
    background: linear-gradient(#6aaee0, #6aaee0) center bottom / 34px 2px no-repeat;
}

.apps .current {
    background: linear-gradient(#6aaee0, #6aaee0) center bottom / 100% 2px no-repeat, #4a4c4b;
}

.ps {
    width: 18px;
    height: 18px;
    border: 1px solid #4db8ee;
    border-radius: 3px;
    background: #071b2b;
    font-size: 10px;
    font-weight: 600;
    line-height: 15px;
    text-align: center;
}

.tray {
    margin-left: auto;
    width: 279px;
    display: grid;
    grid-template-columns: 19px 21px 20px 18px 20px 24px 25px 27px 69px 24px;
    align-items: center;
    justify-content: start;
    font-size: 10px;
    letter-spacing: -0.1px;
    border-right: 1px solid #777;
    margin-right: 4px;
    padding-left: 5px;
}

.lang {
    letter-spacing: -0.4px;
}

.clock {
    line-height: 15px;
    letter-spacing: -0.2px;
    text-align: center;
    padding-right: 12px;
}
```
